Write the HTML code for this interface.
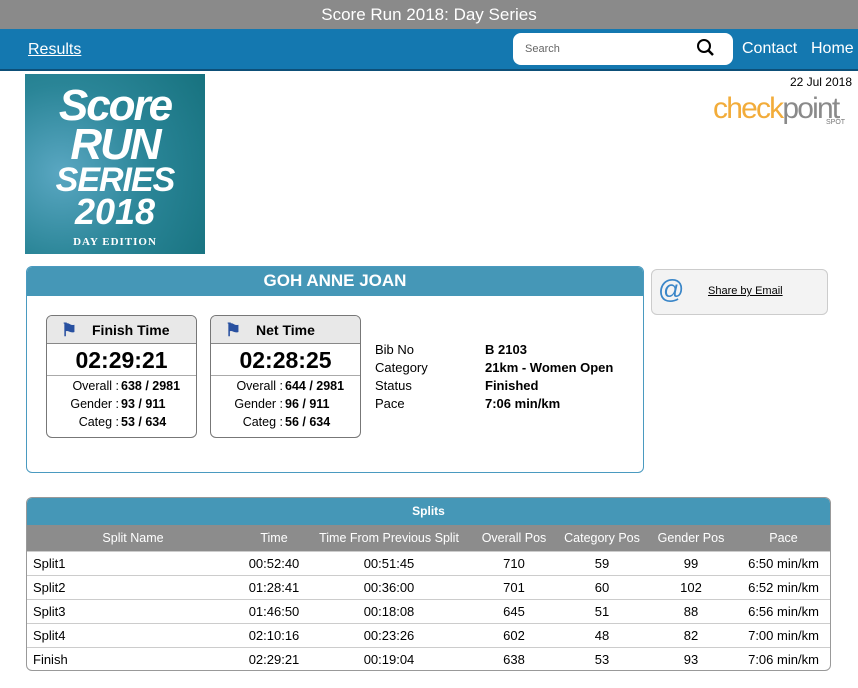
<!DOCTYPE html>
<html><head><meta charset="utf-8"><style>
*{margin:0;padding:0;box-sizing:border-box}
body{width:858px;height:688px;background:#fff;font-family:"Liberation Sans",sans-serif;position:relative;overflow:hidden;color:#000}
.a{position:absolute}
.top{left:0;top:0;width:858px;height:29px;background:#8a8a8a;color:#fff;font-size:17px;text-align:center;line-height:30px}
.nav{left:0;top:29px;width:858px;height:42px;background:#1478b0;border-bottom:2px solid #0d4f78}
.nav a{color:#fff;font-size:16px;position:absolute;top:11px}
.search{left:513px;top:33px;width:220px;height:32px;background:#fff;border-radius:8px;font-size:11px;color:#666;padding:10px 12px}
.logo{left:25px;top:74px;width:180px;height:180px;background:radial-gradient(circle at 20% 55%,#5aa7c2,#2a8597 50%,#17727f);color:#fff;text-align:center;font-weight:bold;font-style:italic}
.panel{border:1px solid #4a9ac0;border-radius:6px;overflow:hidden}
.ph{background:#4597b7;color:#fff;font-weight:bold;text-align:center}
.tb{border:1px solid #777;border-radius:6px;overflow:hidden;width:151px;height:123px}
.tbh{height:28px;background:#e8e8e8;border-bottom:1px solid #888;font-weight:bold;font-size:14px;line-height:28px;padding-left:45px;position:relative}
.tbt{height:32px;border-bottom:1px solid #aaa;text-align:center;font-size:23px;font-weight:bold;line-height:32px}
.tr{font-size:12.5px;line-height:18px;white-space:nowrap}
.tr span{display:inline-block;width:72px;text-align:right}
.tr b{display:inline-block;width:74px;text-align:left;padding-left:2px}
.info{font-size:13px;line-height:18px}
table{border-collapse:collapse;width:100%;font-size:13px}
th{background:#8c8c8c;color:#fff;font-weight:normal;height:26px;font-size:12.5px}
td{height:24px;border-top:1px solid #ccc;text-align:center}
</style></head><body>
<div class="a top">Score Run 2018: Day Series</div>
<div class="a nav">
<a style="left:28px;text-decoration:underline;top:12px">Results</a>
<a style="left:742px">Contact</a><a style="left:811px">Home</a>
</div>
<div class="a search">Search
<svg class="a" style="left:183px;top:5px" width="20" height="20" viewBox="0 0 20 20"><circle cx="8" cy="8" r="6" fill="none" stroke="#000" stroke-width="2"/><path d="M12 12l5 5" stroke="#000" stroke-width="2.5"/></svg></div>
<div class="a logo">
<div style="font-size:44px;line-height:40px;margin-top:12px;letter-spacing:-2px">Score</div>
<div style="font-size:44px;line-height:38px;letter-spacing:-2px">RUN</div>
<div style="font-size:34px;line-height:32px;letter-spacing:-1px">SERIES</div>
<div style="font-size:36px;line-height:32px">2018</div>
<div style="font-size:11px;font-style:normal;font-family:'Liberation Serif',serif;margin-top:8px;letter-spacing:1px">DAY EDITION</div>
</div>
<div class="a" style="right:6px;top:75px;font-size:12px">22 Jul 2018</div>
<div class="a" style="left:713px;top:92px;font-size:30px;letter-spacing:-1.8px;line-height:34px"><span style="color:#f2ac3a">check</span><span style="color:#8a8a8a">point</span></div>
<div class="a" style="left:826px;top:119px;font-size:7px;color:#777">SPOT</div>

<div class="a panel" style="left:26px;top:266px;width:618px;height:207px">
<div class="ph" style="height:29px;font-size:17px;line-height:27px">GOH ANNE JOAN</div>
</div>
<div class="a tb" style="left:46px;top:315px">
<div class="tbh"><span class="a" style="left:14px;top:0;color:#2850a0;font-size:18px">⚑</span>Finish Time</div>
<div class="tbt">02:29:21</div>
<div class="tr" style="padding-top:1px"><span>Overall :</span><b>638 / 2981</b></div>
<div class="tr"><span>Gender :</span><b>93 / 911</b></div>
<div class="tr"><span>Categ :</span><b>53 / 634</b></div>
</div>
<div class="a tb" style="left:210px;top:315px">
<div class="tbh"><span class="a" style="left:14px;top:0;color:#2850a0;font-size:18px">⚑</span>Net Time</div>
<div class="tbt">02:28:25</div>
<div class="tr" style="padding-top:1px"><span>Overall :</span><b>644 / 2981</b></div>
<div class="tr"><span>Gender :</span><b>96 / 911</b></div>
<div class="tr"><span>Categ :</span><b>56 / 634</b></div>
</div>
<div class="a info" style="left:375px;top:341px">Bib No<br>Category<br>Status<br>Pace</div>
<div class="a info" style="left:485px;top:341px;font-weight:bold">B 2103<br>21km - Women Open<br>Finished<br>7:06 min/km</div>

<div class="a" style="left:651px;top:269px;width:177px;height:46px;background:#f3f3f3;border:1px solid #ccc;border-radius:6px">
<div class="a" style="left:6px;top:4px;font-size:26px;color:#3a86c8">@</div>
<div class="a" style="left:56px;top:15px;font-size:11px;text-decoration:underline">Share by Email</div>
</div>

<div class="a panel" style="left:26px;top:497px;width:805px;height:174px;border-color:#999">
<div class="ph" style="height:27px;font-size:12px;line-height:27px">Splits</div>
<table>
<tr><th style="width:212px">Split Name</th><th style="width:70px">Time</th><th style="width:160px">Time From Previous Split</th><th style="width:90px">Overall Pos</th><th style="width:86px">Category Pos</th><th style="width:92px">Gender Pos</th><th>Pace</th></tr>
<tr><td style="text-align:left;padding-left:6px">Split1</td><td>00:52:40</td><td>00:51:45</td><td>710</td><td>59</td><td>99</td><td>6:50 min/km</td></tr>
<tr><td style="text-align:left;padding-left:6px">Split2</td><td>01:28:41</td><td>00:36:00</td><td>701</td><td>60</td><td>102</td><td>6:52 min/km</td></tr>
<tr><td style="text-align:left;padding-left:6px">Split3</td><td>01:46:50</td><td>00:18:08</td><td>645</td><td>51</td><td>88</td><td>6:56 min/km</td></tr>
<tr><td style="text-align:left;padding-left:6px">Split4</td><td>02:10:16</td><td>00:23:26</td><td>602</td><td>48</td><td>82</td><td>7:00 min/km</td></tr>
<tr><td style="text-align:left;padding-left:6px">Finish</td><td>02:29:21</td><td>00:19:04</td><td>638</td><td>53</td><td>93</td><td>7:06 min/km</td></tr>
</table>
</div>
</body></html>
